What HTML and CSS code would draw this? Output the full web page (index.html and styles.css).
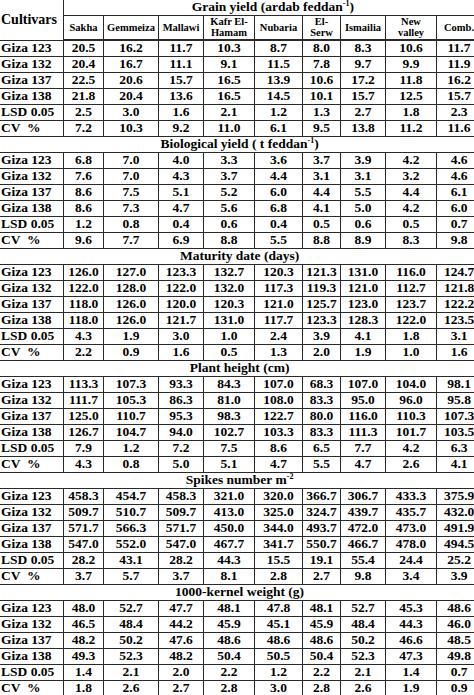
FILE: index.html
```html
<!DOCTYPE html>
<html>
<head>
<meta charset="utf-8">
<link rel="stylesheet" href="styles.css">
</head>
<body>
<div class="sheet">
<table class="data">
<colgroup>
<col class="c-name"><col class="c-sakha"><col class="c-gem"><col class="c-mal"><col class="c-kafr"><col class="c-nub"><col class="c-serw"><col class="c-ism"><col class="c-new"><col class="c-comb">
</colgroup>
<tr class="top">
<td class="cult" rowspan="2">Cultivars</td>
<td class="sec first" colspan="9">Grain yield (ardab feddan<sup>-1</sup>)</td>
</tr>
<tr class="head">
<td>Sakha</td><td>Gemmeiza</td><td>Mallawi</td><td>Kafr El-<br>Hamam</td><td>Nubaria</td><td>El-<br>Serw</td><td>Ismailia</td><td>New<br>valley</td><td>Comb.</td>
</tr>
<tr class="afterhead"><td class="name">Giza 123</td><td>20.5</td><td>16.2</td><td>11.7</td><td>10.3</td><td>8.7</td><td>8.0</td><td>8.3</td><td>10.6</td><td>11.7</td></tr>
<tr><td class="name">Giza 132</td><td>20.4</td><td>16.7</td><td>11.1</td><td>9.1</td><td>11.5</td><td>7.8</td><td>9.7</td><td>9.9</td><td>11.9</td></tr>
<tr><td class="name">Giza 137</td><td>22.5</td><td>20.6</td><td>15.7</td><td>16.5</td><td>13.9</td><td>10.6</td><td>17.2</td><td>11.8</td><td>16.2</td></tr>
<tr><td class="name">Giza 138</td><td>21.8</td><td>20.4</td><td>13.6</td><td>16.5</td><td>14.5</td><td>10.1</td><td>15.7</td><td>12.5</td><td>15.7</td></tr>
<tr><td class="name">LSD 0.05</td><td>2.5</td><td>3.0</td><td>1.6</td><td>2.1</td><td>1.2</td><td>1.3</td><td>2.7</td><td>1.8</td><td>2.3</td></tr>
<tr><td class="name">CV &nbsp;%</td><td>7.2</td><td>10.3</td><td>9.2</td><td>11.0</td><td>6.1</td><td>9.5</td><td>13.8</td><td>11.2</td><td>11.6</td></tr>

<tr class="title"><td class="sec" colspan="10">Biological yield ( t feddan<sup>-1</sup>)</td></tr>
<tr><td class="name">Giza 123</td><td>6.8</td><td>7.0</td><td>4.0</td><td>3.3</td><td>3.6</td><td>3.7</td><td>3.9</td><td>4.2</td><td>4.6</td></tr>
<tr><td class="name">Giza 132</td><td>7.6</td><td>7.0</td><td>4.3</td><td>3.7</td><td>4.4</td><td>3.1</td><td>3.1</td><td>3.2</td><td>4.6</td></tr>
<tr><td class="name">Giza 137</td><td>8.6</td><td>7.5</td><td>5.1</td><td>5.2</td><td>6.0</td><td>4.4</td><td>5.5</td><td>4.4</td><td>6.1</td></tr>
<tr><td class="name">Giza 138</td><td>8.6</td><td>7.3</td><td>4.7</td><td>5.6</td><td>6.8</td><td>4.1</td><td>5.0</td><td>4.2</td><td>6.0</td></tr>
<tr><td class="name">LSD 0.05</td><td>1.2</td><td>0.8</td><td>0.4</td><td>0.6</td><td>0.4</td><td>0.5</td><td>0.6</td><td>0.5</td><td>0.7</td></tr>
<tr><td class="name">CV &nbsp;%</td><td>9.6</td><td>7.7</td><td>6.9</td><td>8.8</td><td>5.5</td><td>8.8</td><td>8.9</td><td>8.3</td><td>9.8</td></tr>

<tr class="title"><td class="sec" colspan="10">Maturity date (days)</td></tr>
<tr><td class="name">Giza 123</td><td>126.0</td><td>127.0</td><td>123.3</td><td>132.7</td><td>120.3</td><td>121.3</td><td>131.0</td><td>116.0</td><td>124.7</td></tr>
<tr><td class="name">Giza 132</td><td>122.0</td><td>128.0</td><td>122.0</td><td>132.0</td><td>117.3</td><td>119.3</td><td>121.0</td><td>112.7</td><td>121.8</td></tr>
<tr><td class="name">Giza 137</td><td>118.0</td><td>126.0</td><td>120.0</td><td>120.3</td><td>121.0</td><td>125.7</td><td>123.0</td><td>123.7</td><td>122.2</td></tr>
<tr><td class="name">Giza 138</td><td>118.0</td><td>126.0</td><td>121.7</td><td>131.0</td><td>117.7</td><td>123.3</td><td>128.3</td><td>122.0</td><td>123.5</td></tr>
<tr><td class="name">LSD 0.05</td><td>4.3</td><td>1.9</td><td>3.0</td><td>1.0</td><td>2.4</td><td>3.9</td><td>4.1</td><td>1.8</td><td>3.1</td></tr>
<tr><td class="name">CV &nbsp;%</td><td>2.2</td><td>0.9</td><td>1.6</td><td>0.5</td><td>1.3</td><td>2.0</td><td>1.9</td><td>1.0</td><td>1.6</td></tr>

<tr class="title"><td class="sec" colspan="10">Plant height (cm)</td></tr>
<tr><td class="name">Giza 123</td><td>113.3</td><td>107.3</td><td>93.3</td><td>84.3</td><td>107.0</td><td>68.3</td><td>107.0</td><td>104.0</td><td>98.1</td></tr>
<tr><td class="name">Giza 132</td><td>111.7</td><td>105.3</td><td>86.3</td><td>81.0</td><td>108.0</td><td>83.3</td><td>95.0</td><td>96.0</td><td>95.8</td></tr>
<tr><td class="name">Giza 137</td><td>125.0</td><td>110.7</td><td>95.3</td><td>98.3</td><td>122.7</td><td>80.0</td><td>116.0</td><td>110.3</td><td>107.3</td></tr>
<tr><td class="name">Giza 138</td><td>126.7</td><td>104.7</td><td>94.0</td><td>102.7</td><td>103.3</td><td>83.3</td><td>111.3</td><td>101.7</td><td>103.5</td></tr>
<tr><td class="name">LSD 0.05</td><td>7.9</td><td>1.2</td><td>7.2</td><td>7.5</td><td>8.6</td><td>6.5</td><td>7.7</td><td>4.2</td><td>6.3</td></tr>
<tr><td class="name">CV &nbsp;%</td><td>4.3</td><td>0.8</td><td>5.0</td><td>5.1</td><td>4.7</td><td>5.5</td><td>4.7</td><td>2.6</td><td>4.1</td></tr>

<tr class="title"><td class="sec" colspan="10">Spikes number m<sup>-2</sup></td></tr>
<tr><td class="name">Giza 123</td><td>458.3</td><td>454.7</td><td>458.3</td><td>321.0</td><td>320.0</td><td>366.7</td><td>306.7</td><td>433.3</td><td>375.9</td></tr>
<tr><td class="name">Giza 132</td><td>509.7</td><td>510.7</td><td>509.7</td><td>413.0</td><td>325.0</td><td>324.7</td><td>439.7</td><td>435.7</td><td>432.0</td></tr>
<tr><td class="name">Giza 137</td><td>571.7</td><td>566.3</td><td>571.7</td><td>450.0</td><td>344.0</td><td>493.7</td><td>472.0</td><td>473.0</td><td>491.9</td></tr>
<tr><td class="name">Giza 138</td><td>547.0</td><td>552.0</td><td>547.0</td><td>467.7</td><td>341.7</td><td>550.7</td><td>466.7</td><td>478.0</td><td>494.5</td></tr>
<tr><td class="name">LSD 0.05</td><td>28.2</td><td>43.1</td><td>28.2</td><td>44.3</td><td>15.5</td><td>19.1</td><td>55.4</td><td>24.4</td><td>25.2</td></tr>
<tr><td class="name">CV &nbsp;%</td><td>3.7</td><td>5.7</td><td>3.7</td><td>8.1</td><td>2.8</td><td>2.7</td><td>9.8</td><td>3.4</td><td>3.9</td></tr>

<tr class="title"><td class="sec" colspan="10">1000-kernel weight (g)</td></tr>
<tr><td class="name">Giza 123</td><td>48.0</td><td>52.7</td><td>47.7</td><td>48.1</td><td>47.8</td><td>48.1</td><td>52.7</td><td>45.3</td><td>48.6</td></tr>
<tr><td class="name">Giza 132</td><td>46.5</td><td>48.4</td><td>44.2</td><td>45.9</td><td>45.1</td><td>45.9</td><td>48.4</td><td>44.3</td><td>46.0</td></tr>
<tr><td class="name">Giza 137</td><td>48.2</td><td>50.2</td><td>47.6</td><td>48.6</td><td>48.6</td><td>48.6</td><td>50.2</td><td>46.6</td><td>48.5</td></tr>
<tr><td class="name">Giza 138</td><td>49.3</td><td>52.3</td><td>48.2</td><td>50.4</td><td>50.5</td><td>50.4</td><td>52.3</td><td>47.3</td><td>49.8</td></tr>
<tr><td class="name">LSD 0.05</td><td>1.4</td><td>2.1</td><td>2.0</td><td>2.2</td><td>1.2</td><td>2.2</td><td>2.1</td><td>1.4</td><td>0.7</td></tr>
<tr><td class="name">CV &nbsp;%</td><td>1.8</td><td>2.6</td><td>2.7</td><td>2.8</td><td>3.0</td><td>2.8</td><td>2.6</td><td>1.9</td><td>0.9</td></tr>
</table>
</div>
</body>
</html>
```
FILE: styles.css
```css
html, body {
  margin: 0;
  padding: 0;
  background: #fff;
  overflow: hidden;
}
body {
  font-family: "Liberation Serif", "Times New Roman", serif;
  font-weight: bold;
  color: #000;
}
.sheet {
  width: 484px;
  margin-left: -3px;
}
.data {
  border-collapse: collapse;
  table-layout: fixed;
  width: 484px;
}
.c-name { width: 66px; }
.c-sakha { width: 40px; }
.c-gem { width: 55px; }
.c-mal { width: 45px; }
.c-kafr { width: 51px; }
.c-nub { width: 48px; }
.c-serw { width: 38px; }
.c-ism { width: 45px; }
.c-new { width: 51px; }
.c-comb { width: 45px; }

.data td {
  border: 1px solid #2a2a2a;
  padding: 0;
  text-align: center;
  vertical-align: middle;
  font-size: 13.5px;
  line-height: 14px;
  white-space: nowrap;
  overflow: hidden;
}
.data tr { height: 16px; }
.data tr.top { height: 15px; }
.data tr.head { height: 25px; }
.data tr.head td {
  font-size: 10.5px;
  line-height: 11px;
  border-bottom: 2px solid #2a2a2a;
}
.data td.name {
  text-align: left;
  padding-left: 3px;
}
.data td.cult {
  text-align: left;
  padding-left: 3px;
  font-size: 14px;
}
.data td.sec {
  font-size: 13.5px;
  line-height: 14px;
}
.data tr.title td {
  border-left: none;
  border-right: none;
}
.data td.first {
  border-top: none;
  border-right: none;
}
.data tr.top td.cult {
  border-top: none;
}
sup {
  font-size: 8px;
  line-height: 0;
  vertical-align: 5px;
}
```
